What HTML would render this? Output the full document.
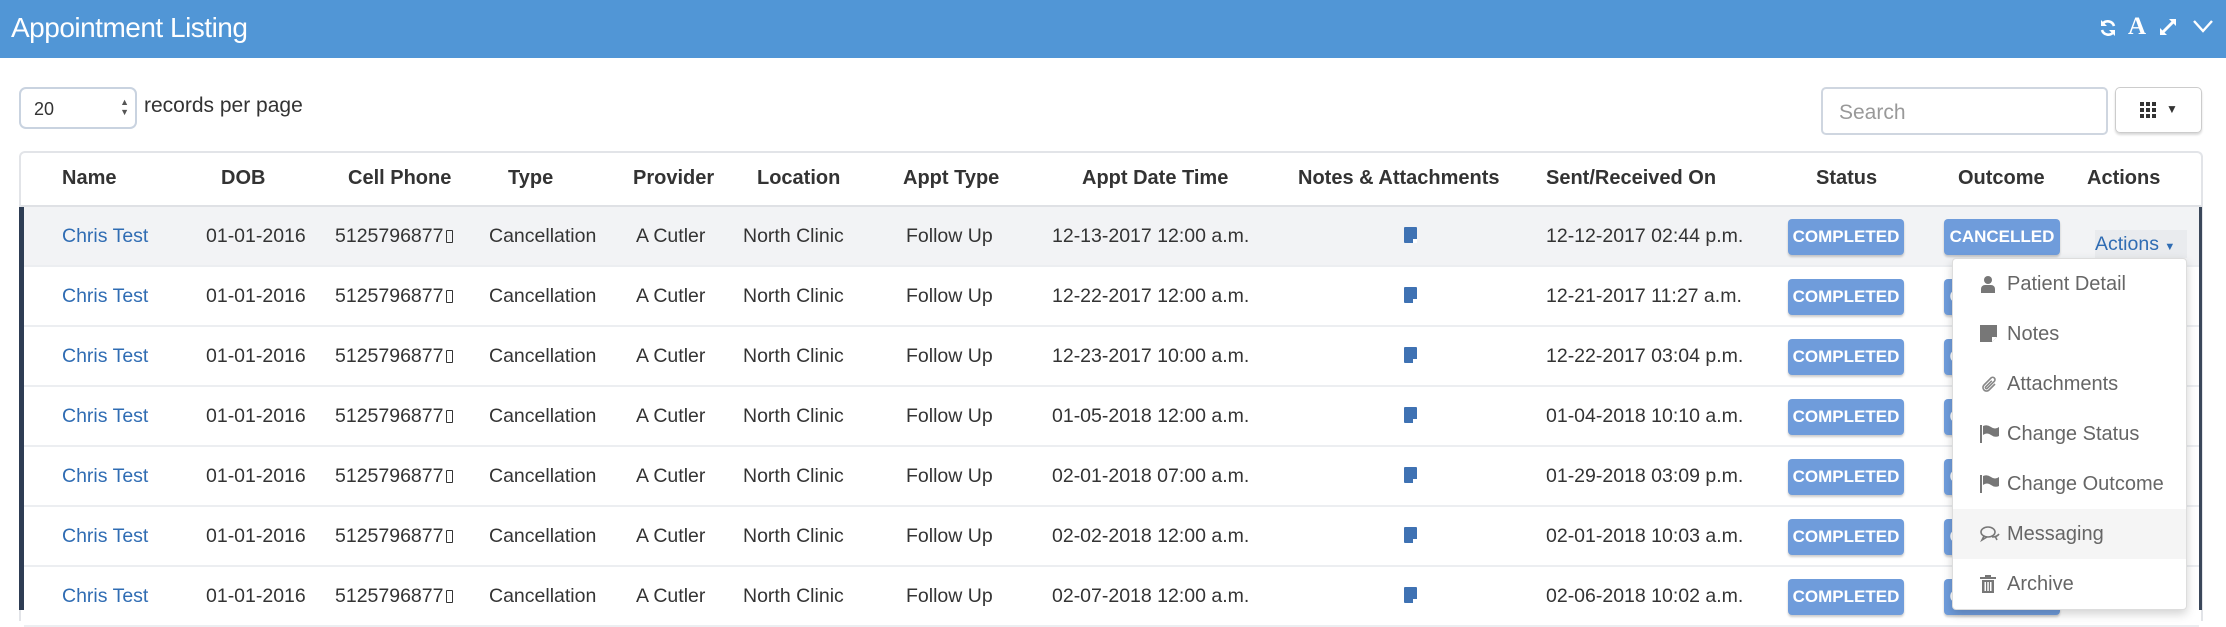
<!DOCTYPE html>
<html><head><meta charset="utf-8">
<style>
*{margin:0;padding:0;box-sizing:border-box}
body{width:2226px;height:610px;overflow:hidden;background:#fff;font-family:"Liberation Sans",sans-serif;color:#333;position:relative}
.hdr{position:absolute;left:0;top:0;width:2226px;height:58px;background:#5196d6}
.hdr .t{position:absolute;left:11px;top:12px;font-size:28px;color:#fff;letter-spacing:-0.5px}
.ic{position:absolute;color:#fff;font-size:22px;top:14px}
.sel{position:absolute;left:19px;top:87px;width:118px;height:42px;border:2px solid #c9d3e0;border-radius:7px;font-size:18px;padding:10px 0 0 13px}
.sel .ar{position:absolute;right:6px;top:8px;font-size:9px;line-height:10px;color:#555}
.rpp{position:absolute;left:144px;top:94px;font-size:21px}
.search{position:absolute;left:1821px;top:87px;width:287px;height:48px;border:2px solid #cfd6e0;border-radius:5px;font-size:21px;color:#999;padding:12px 0 0 16px}
.btn{position:absolute;left:2115px;top:87px;width:87px;height:46px;border:1px solid #ccc;border-radius:5px;box-shadow:0 2px 2px rgba(0,0,0,.15)}
.tbl{position:absolute;left:19px;top:151px;width:2184px;height:470px;border:2px solid #e2e4e8;border-bottom:none;border-radius:6px 6px 0 0}
.th{position:absolute;top:167px;font-size:20px;font-weight:bold;color:#333}
.hline{position:absolute;left:21px;top:205px;width:2181px;height:3px;background:#dfe1e5}
.lb{position:absolute;left:19px;top:207px;width:5px;height:403px;background:#2e3d54}
.rb{position:absolute;left:2199px;top:207px;width:3px;height:403px;background:#3a475a}
.row{position:absolute;left:24px;width:2175px;height:60px;border-bottom:2px solid #eceef1}
.row span{position:absolute;top:0;line-height:58px;font-size:19.5px;white-space:nowrap}
.row .nm{color:#2f6cb3}
.note{position:absolute;top:20px;width:13px;height:16px;background:#3f72b3;border-radius:1px}
.note:after{content:"";position:absolute;right:0;bottom:0;width:4px;height:4px;background:#fff}
.b{position:absolute;top:12px;height:36px;width:116px;background:#6f9cdb;border-radius:4px;color:#fff;font-weight:bold;font-size:17px;text-align:center;line-height:36px;box-shadow:0 2px 2px rgba(0,0,0,.2)}
.ph{display:inline-block;width:7px;height:13px;border:1.5px solid #333;border-radius:1px;margin-left:3px;vertical-align:-1px}
.dd{position:absolute;left:1952px;top:258px;width:235px;height:352px;background:#fff;border:1px solid #ddd;border-radius:4px;box-shadow:0 4px 10px rgba(0,0,0,.18)}
.it{position:absolute;left:0;width:233px;height:50px;font-size:20px;color:#666;line-height:50px;padding-left:54px}
.it i{position:absolute;left:27px;top:16px;width:20px;height:18px;font-style:normal;display:block;line-height:0}
.it svg{display:block}
</style></head><body>
<div class="hdr"><div class="t">Appointment Listing</div>
<svg class="ic" style="left:2098px;top:18px" width="20" height="20" viewBox="0 0 20 20"><path d="M16 8A6.5 6.5 0 0 0 4.5 6M4 12a6.5 6.5 0 0 0 11.5 2" stroke="#fff" stroke-width="2.6" fill="none"/><path d="M3 2v6h6z M17 18v-6h-6z" fill="#fff"/></svg>
<div class="ic" style="left:2128px;top:13px;font-family:'Liberation Serif',serif;font-weight:bold;font-size:25px">A</div>
<svg class="ic" style="left:2158px;top:17px" width="20" height="20" viewBox="0 0 20 20"><path d="M11 2h7v7zM9 18H2v-7z" fill="#fff"/><path d="M16 4L4 16" stroke="#fff" stroke-width="3"/></svg>
<svg class="ic" style="left:2192px;top:19px" width="22" height="14" viewBox="0 0 22 14"><path d="M2 2l9 10 9-10" stroke="#fff" stroke-width="2.4" fill="none"/></svg>
</div>
<div class="sel">20<div class="ar">▲<br>▼</div></div>
<div class="rpp">records per page</div>
<div class="search">Search</div>
<div class="btn"><svg style="position:absolute;left:24px;top:14px" width="16" height="16" viewBox="0 0 16 16" fill="#333"><rect x="0" y="0" width="4" height="4"/><rect x="6" y="0" width="4" height="4"/><rect x="12" y="0" width="4" height="4"/><rect x="0" y="6" width="4" height="4"/><rect x="6" y="6" width="4" height="4"/><rect x="12" y="6" width="4" height="4"/><rect x="0" y="12" width="4" height="4"/><rect x="6" y="12" width="4" height="4"/><rect x="12" y="12" width="4" height="4"/></svg><span style="position:absolute;left:50px;top:14px;font-size:12px">▼</span></div>
<div class="tbl"></div>
<div class="th" style="left:62px">Name</div><div class="th" style="left:221px">DOB</div><div class="th" style="left:348px">Cell Phone</div><div class="th" style="left:508px">Type</div><div class="th" style="left:633px">Provider</div><div class="th" style="left:757px">Location</div><div class="th" style="left:903px">Appt Type</div><div class="th" style="left:1082px">Appt Date Time</div><div class="th" style="left:1298px">Notes &amp; Attachments</div><div class="th" style="left:1546px">Sent/Received On</div><div class="th" style="left:1816px">Status</div><div class="th" style="left:1958px">Outcome</div><div class="th" style="left:2087px">Actions</div>
<div class="hline"></div>

<div class="row" style="top:207px;background:#f2f3f5"><span class="nm" style="left:38px">Chris Test</span><span style="left:182px">01-01-2016</span><span style="left:311px">5125796877<i class="ph"></i></span><span style="left:465px">Cancellation</span><span style="left:612px">A Cutler</span><span style="left:719px">North Clinic</span><span style="left:882px">Follow Up</span><span style="left:1028px">12-13-2017 12:00 a.m.</span><div class="note" style="left:1380px"></div><span style="left:1522px">12-12-2017 02:44 p.m.</span><div class="b" style="left:1764px">COMPLETED</div><div class="b" style="left:1920px">CANCELLED</div><span style="left:2071px;top:23px;line-height:28px;height:28px;width:92px;background:#e9ebee;color:#2f6cb3">Actions <small style="font-size:11px">▼</small></span></div>
<div class="row" style="top:267px"><span class="nm" style="left:38px">Chris Test</span><span style="left:182px">01-01-2016</span><span style="left:311px">5125796877<i class="ph"></i></span><span style="left:465px">Cancellation</span><span style="left:612px">A Cutler</span><span style="left:719px">North Clinic</span><span style="left:882px">Follow Up</span><span style="left:1028px">12-22-2017 12:00 a.m.</span><div class="note" style="left:1380px"></div><span style="left:1522px">12-21-2017 11:27 a.m.</span><div class="b" style="left:1764px">COMPLETED</div><div class="b" style="left:1920px">CANCELLED</div></div>
<div class="row" style="top:327px"><span class="nm" style="left:38px">Chris Test</span><span style="left:182px">01-01-2016</span><span style="left:311px">5125796877<i class="ph"></i></span><span style="left:465px">Cancellation</span><span style="left:612px">A Cutler</span><span style="left:719px">North Clinic</span><span style="left:882px">Follow Up</span><span style="left:1028px">12-23-2017 10:00 a.m.</span><div class="note" style="left:1380px"></div><span style="left:1522px">12-22-2017 03:04 p.m.</span><div class="b" style="left:1764px">COMPLETED</div><div class="b" style="left:1920px">CANCELLED</div></div>
<div class="row" style="top:387px"><span class="nm" style="left:38px">Chris Test</span><span style="left:182px">01-01-2016</span><span style="left:311px">5125796877<i class="ph"></i></span><span style="left:465px">Cancellation</span><span style="left:612px">A Cutler</span><span style="left:719px">North Clinic</span><span style="left:882px">Follow Up</span><span style="left:1028px">01-05-2018 12:00 a.m.</span><div class="note" style="left:1380px"></div><span style="left:1522px">01-04-2018 10:10 a.m.</span><div class="b" style="left:1764px">COMPLETED</div><div class="b" style="left:1920px">CANCELLED</div></div>
<div class="row" style="top:447px"><span class="nm" style="left:38px">Chris Test</span><span style="left:182px">01-01-2016</span><span style="left:311px">5125796877<i class="ph"></i></span><span style="left:465px">Cancellation</span><span style="left:612px">A Cutler</span><span style="left:719px">North Clinic</span><span style="left:882px">Follow Up</span><span style="left:1028px">02-01-2018 07:00 a.m.</span><div class="note" style="left:1380px"></div><span style="left:1522px">01-29-2018 03:09 p.m.</span><div class="b" style="left:1764px">COMPLETED</div><div class="b" style="left:1920px">CANCELLED</div></div>
<div class="row" style="top:507px"><span class="nm" style="left:38px">Chris Test</span><span style="left:182px">01-01-2016</span><span style="left:311px">5125796877<i class="ph"></i></span><span style="left:465px">Cancellation</span><span style="left:612px">A Cutler</span><span style="left:719px">North Clinic</span><span style="left:882px">Follow Up</span><span style="left:1028px">02-02-2018 12:00 a.m.</span><div class="note" style="left:1380px"></div><span style="left:1522px">02-01-2018 10:03 a.m.</span><div class="b" style="left:1764px">COMPLETED</div><div class="b" style="left:1920px">CANCELLED</div></div>
<div class="row" style="top:567px"><span class="nm" style="left:38px">Chris Test</span><span style="left:182px">01-01-2016</span><span style="left:311px">5125796877<i class="ph"></i></span><span style="left:465px">Cancellation</span><span style="left:612px">A Cutler</span><span style="left:719px">North Clinic</span><span style="left:882px">Follow Up</span><span style="left:1028px">02-07-2018 12:00 a.m.</span><div class="note" style="left:1380px"></div><span style="left:1522px">02-06-2018 10:02 a.m.</span><div class="b" style="left:1764px">COMPLETED</div><div class="b" style="left:1920px">CANCELLED</div></div>
<div class="lb"></div><div class="rb"></div>

<div class="dd">
<div class="it" style="top:0"><i><svg width="16" height="18" viewBox="0 0 16 18" fill="#777"><circle cx="8" cy="5" r="4"/><path d="M1 18v-4a4 4 0 0 1 4-4h6a4 4 0 0 1 4 4v4z"/></svg></i>Patient Detail</div>
<div class="it" style="top:50px"><i><svg width="18" height="18" viewBox="0 0 18 18"><path d="M0 0h17v12l-5 5H0z" fill="#777"/><path d="M12 17v-5h5" fill="#fff"/></svg></i>Notes</div>
<div class="it" style="top:100px"><i><svg width="18" height="18" viewBox="0 0 18 18"><path d="M15 9l-6 6a3.5 3.5 0 0 1-5-5l7-7a2.3 2.3 0 0 1 3.3 3.3l-7 7a1 1 0 0 1-1.5-1.5l6-6" stroke="#888" stroke-width="1.6" fill="none"/></svg></i>Attachments</div>
<div class="it" style="top:150px"><i><svg width="20" height="18" viewBox="0 0 20 18" fill="#777"><rect x="0" y="0" width="2" height="18"/><path d="M3 1q4-2 8 1t8 0v9q-4 2-8-1t-8 0z"/></svg></i>Change Status</div>
<div class="it" style="top:200px"><i><svg width="20" height="18" viewBox="0 0 20 18" fill="#777"><rect x="0" y="0" width="2" height="18"/><path d="M3 1q4-2 8 1t8 0v9q-4 2-8-1t-8 0z"/></svg></i>Change Outcome</div>
<div class="it" style="top:250px;background:#f5f5f5"><i><svg width="20" height="18" viewBox="0 0 20 18" fill="none" stroke="#777" stroke-width="1.6"><ellipse cx="8" cy="7" rx="7" ry="5"/><path d="M4 11l-2 4 5-3M12 12q5 0 7-3M15 11l2 4"/></svg></i>Messaging</div>
<div class="it" style="top:300px"><i><svg width="16" height="18" viewBox="0 0 16 18" fill="#777"><rect x="0" y="2" width="16" height="2"/><rect x="5" y="0" width="6" height="3"/><path d="M2 5h12v13H2z"/><rect x="4.5" y="7" width="1.5" height="9" fill="#fff"/><rect x="7.3" y="7" width="1.5" height="9" fill="#fff"/><rect x="10" y="7" width="1.5" height="9" fill="#fff"/></svg></i>Archive</div>
</div>
</body></html>
